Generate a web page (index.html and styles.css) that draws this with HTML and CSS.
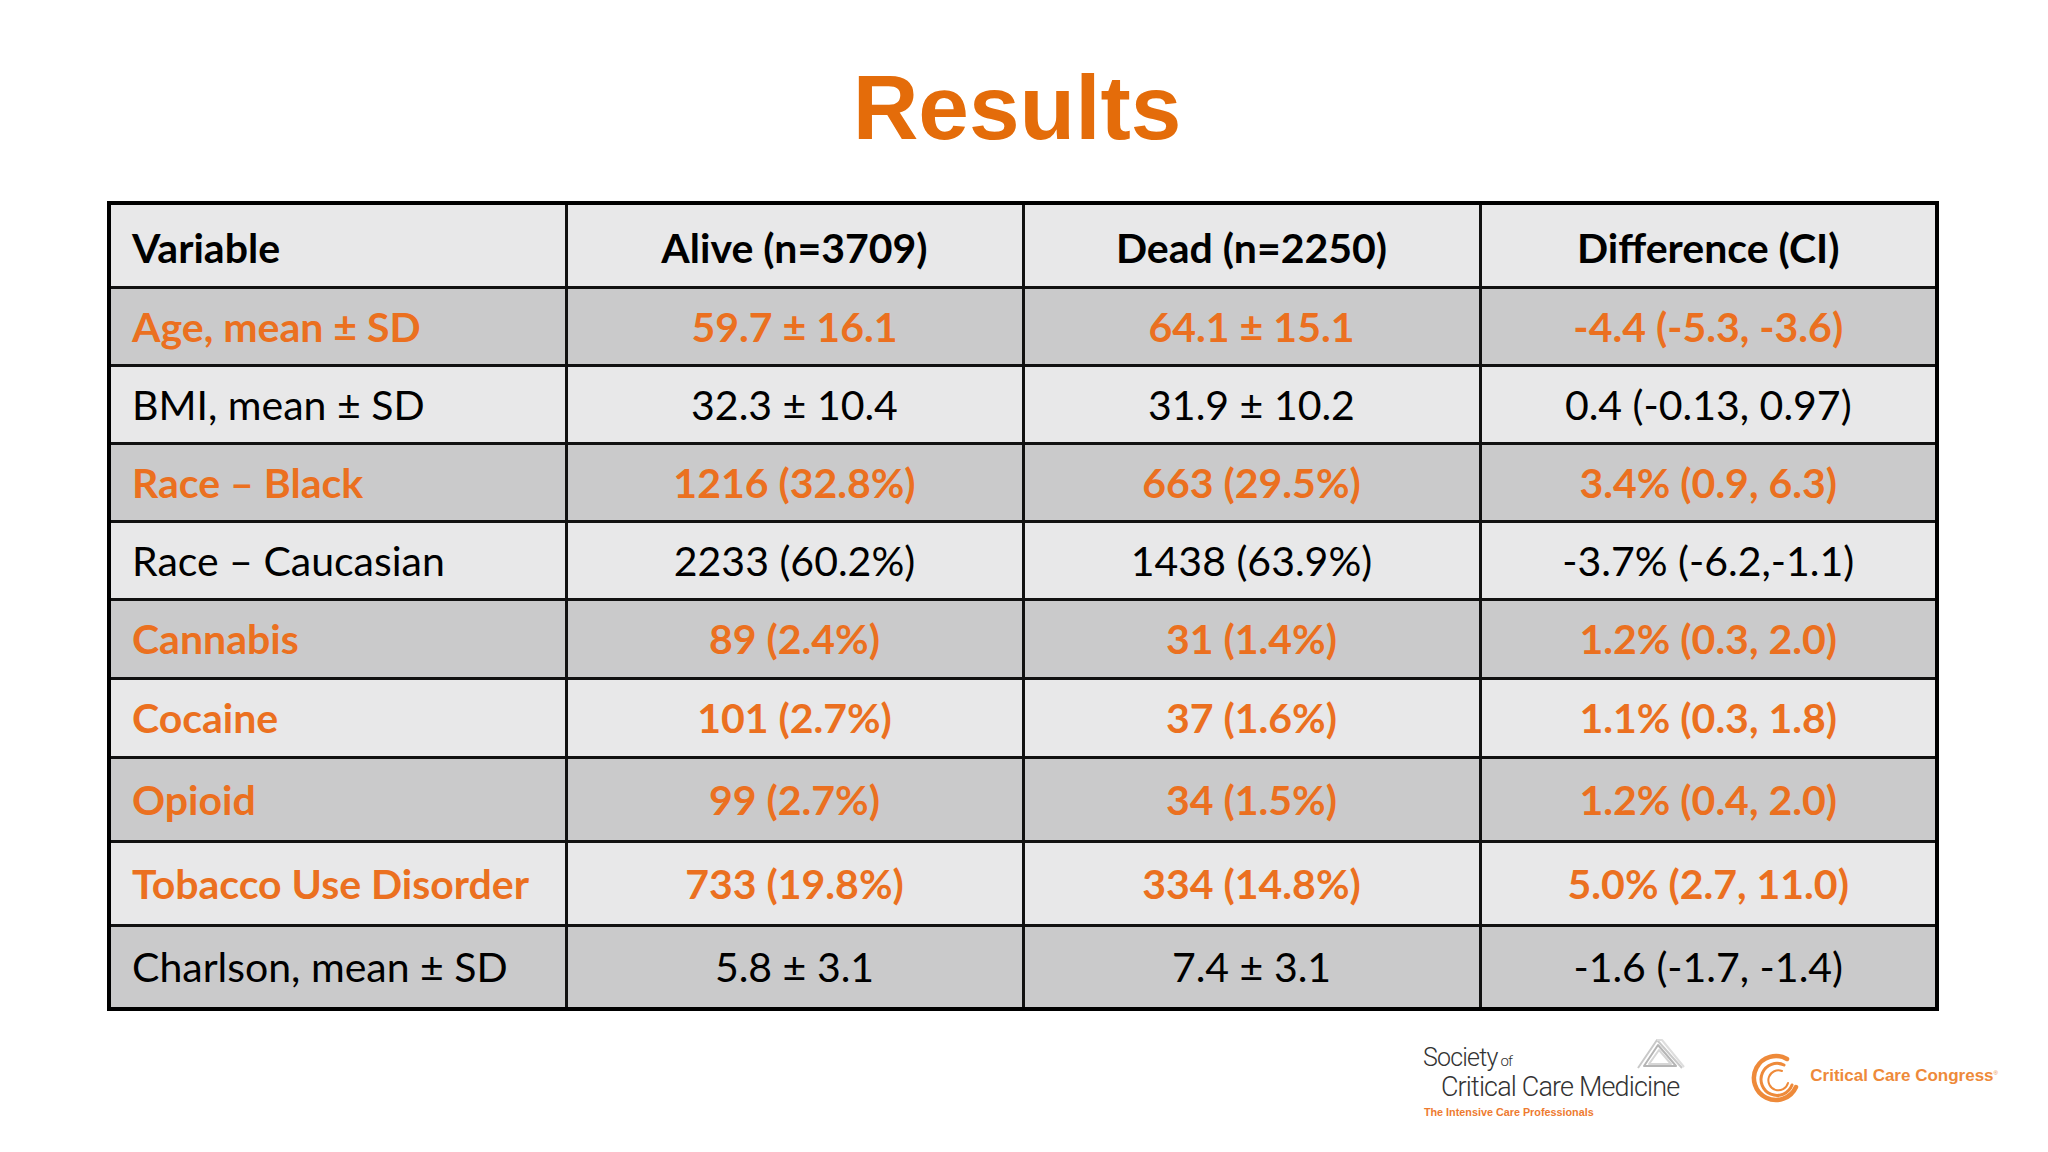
FILE: index.html
```html
<!DOCTYPE html>
<html>
<head>
<meta charset="utf-8">
<link rel="stylesheet" href="styles.css">
</head>
<body>
<div class="slide">
  <h1 class="title">Results</h1>
  <table class="results">
    <colgroup>
      <col class="c1"><col class="c2"><col class="c3"><col class="c4">
    </colgroup>
    <thead>
      <tr class="light h84">
        <th class="var">Variable</th>
        <th>Alive (n=3709)</th>
        <th>Dead (n=2250)</th>
        <th>Difference (CI)</th>
      </tr>
    </thead>
    <tbody>
      <tr class="dark hl h78">
        <td class="var">Age, mean ± SD</td><td>59.7 ± 16.1</td><td>64.1 ± 15.1</td><td>-4.4 (-5.3, -3.6)</td>
      </tr>
      <tr class="light h78">
        <td class="var">BMI, mean ± SD</td><td>32.3 ± 10.4</td><td>31.9 ± 10.2</td><td>0.4 (-0.13, 0.97)</td>
      </tr>
      <tr class="dark hl h78">
        <td class="var">Race – Black</td><td>1216 (32.8%)</td><td>663 (29.5%)</td><td>3.4% (0.9, 6.3)</td>
      </tr>
      <tr class="light h78">
        <td class="var">Race – Caucasian</td><td>2233 (60.2%)</td><td>1438 (63.9%)</td><td>-3.7% (-6.2,-1.1)</td>
      </tr>
      <tr class="dark hl h79">
        <td class="var">Cannabis</td><td>89 (2.4%)</td><td>31 (1.4%)</td><td>1.2% (0.3, 2.0)</td>
      </tr>
      <tr class="light hl h79">
        <td class="var">Cocaine</td><td>101 (2.7%)</td><td>37 (1.6%)</td><td>1.1% (0.3, 1.8)</td>
      </tr>
      <tr class="dark hl h84">
        <td class="var">Opioid</td><td>99 (2.7%)</td><td>34 (1.5%)</td><td>1.2% (0.4, 2.0)</td>
      </tr>
      <tr class="light hl h84">
        <td class="var">Tobacco Use Disorder</td><td>733 (19.8%)</td><td>334 (14.8%)</td><td>5.0% (2.7, 11.0)</td>
      </tr>
      <tr class="dark h84">
        <td class="var">Charlson, mean ± SD</td><td>5.8 ± 3.1</td><td>7.4 ± 3.1</td><td>-1.6 (-1.7, -1.4)</td>
      </tr>
    </tbody>
  </table>
  <footer class="logos">
    <div class="sccm">
      <div class="sccm-text">
        <div class="sccm-line1">Society<span class="of">of</span></div>
        <div class="sccm-line2">Critical Care Medicine</div>
        <div class="sccm-tag">The Intensive Care Professionals</div>
      </div>
      <svg class="sccm-mark" width="50" height="32" viewBox="0 0 50 32">
        <g fill="none" stroke-linejoin="round">
          <path d="M3 30 L22 2 L47 30" stroke="#c9c9c9" stroke-width="2"/>
          <path d="M9 28 L23 7 L41 28 Z" stroke="#b5b5b5" stroke-width="2"/>
          <path d="M14 26 L24 12 L36 26 Z" stroke="#d6d6d6" stroke-width="2"/>
          <path d="M22 2 L27 2 L49 29" stroke="#dedede" stroke-width="2"/>
        </g>
      </svg>
    </div>
    <div class="ccc">
      <svg class="ccc-mark" width="52" height="52" viewBox="0 0 52 52">
        <g fill="none" stroke="#EE8A3A" stroke-linecap="round">
          <path d="M38 6 A22 22 0 1 0 47 34" stroke-width="4.5"/>
          <path d="M35 12 A16 16 0 1 0 43 32" stroke-width="3"/>
          <path d="M33 18 A10 10 0 1 0 39 30" stroke-width="2"/>
        </g>
      </svg>
      <span class="ccc-text">Critical Care Congress<sup>®</sup></span>
    </div>
  </footer>
</div>
</body>
</html>
```
FILE: styles.css
```css
html, body {
  margin: 0;
  padding: 0;
  background: #ffffff;
}

.slide {
  width: 2048px;
  height: 1152px;
  display: flex;
  flex-direction: column;
  align-items: flex-start;
  box-sizing: border-box;
  padding-top: 62px;
}

.title {
  align-self: stretch;
  margin: 0;
  text-align: center;
  font-family: "Liberation Sans", Arial, sans-serif;
  font-weight: bold;
  font-size: 91px;
  line-height: 91px;
  color: #E46C0A;
  padding-right: 14px;
}

.results {
  margin-top: 48px;
  margin-left: 107px;
  width: 1832px;
  border-collapse: collapse;
  table-layout: fixed;
  border: 4px solid #000;
  font-family: Lato, "Open Sans", sans-serif;
  font-size: 41px;
  color: #000;
}

.results col { width: 25%; }

.results th,
.results td {
  border: 3px solid #111;
  text-align: center;
  vertical-align: middle;
  padding: 0 10px;
  white-space: nowrap;
  font-weight: normal;
}

.results th {
  font-weight: bold;
  padding-top: 4px;
}

.results .var {
  text-align: left;
  padding-left: 21px;
}

.results .light { background: #E8E8E9; }
.results .dark { background: #CACACB; }

.results .hl td {
  color: #EB7020;
  font-weight: bold;
}

.h78 { height: 78px; }
.h79 { height: 79px; }
.h84 { height: 84px; }

.logos {
  align-self: stretch;
  display: flex;
  justify-content: flex-end;
  align-items: flex-start;
  margin-top: 27px;
  padding-right: 50px;
  gap: 64px;
}

.sccm {
  display: flex;
  align-items: flex-start;
}

.sccm-text {
  font-family: Roboto, "Liberation Sans", sans-serif;
  font-weight: 300;
  color: #333;
  padding-top: 8px;
}

.sccm-line1 {
  font-size: 25px;
  line-height: 24px;
  letter-spacing: -0.8px;
}

.sccm-line1 .of {
  font-size: 15px;
  margin-left: 3px;
}

.sccm-line2 {
  font-size: 27px;
  line-height: 28px;
  padding-left: 18px;
  letter-spacing: -0.85px;
}

.sccm-tag {
  font-family: "Liberation Sans", Arial, sans-serif;
  font-weight: bold;
  font-size: 10.8px;
  line-height: 14px;
  color: #EE7B30;
  padding-left: 1px;
  margin-top: 4px;
  white-space: nowrap;
}

.sccm-mark {
  margin-left: -44px;
}

.ccc {
  display: flex;
  align-items: center;
  gap: 9px;
  margin-top: 15px;
}

.ccc-text {
  font-family: "Liberation Sans", Arial, sans-serif;
  font-weight: bold;
  font-size: 17px;
  color: #EE8A3A;
  margin-top: -6px;
}

.ccc-text sup {
  font-size: 6px;
  font-weight: normal;
  vertical-align: 6px;
}
```
